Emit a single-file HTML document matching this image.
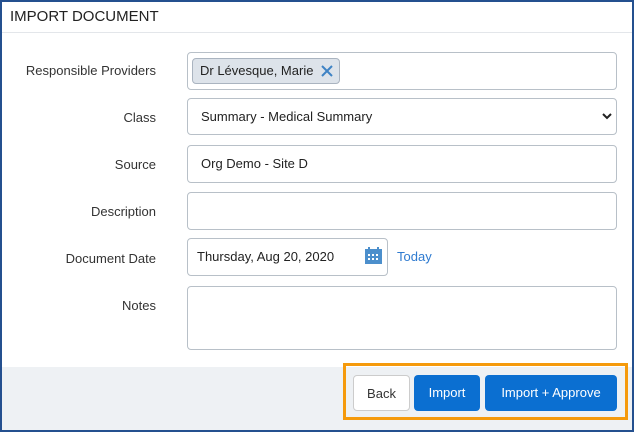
<!DOCTYPE html><html><head><style>
body{margin:0;width:634px;height:432px;overflow:hidden;font-family:"Liberation Sans",sans-serif;font-size:13px;color:#333}
.frame{position:absolute;left:0;top:0;width:630px;height:428px;border:2px solid #24508f;background:#fff}
.hdr{position:absolute;left:0;top:0;width:630px;height:31px;border-bottom:1px solid #e3e6ea;font-size:15px;line-height:30px;padding-left:8px;box-sizing:border-box;color:#222}
.lbl{position:absolute;right:476px;font-size:13px;color:#333;white-space:nowrap}
.in{position:absolute;left:185px;width:430px;border:1px solid #b8c0c8;border-radius:4px;box-sizing:border-box;background:#fff;font-size:13px;color:#222;white-space:nowrap}
.foot{position:absolute;left:0;top:365px;width:630px;height:63px;background:#eef1f4}
.org{position:absolute;left:341px;top:361px;width:285px;height:57px;border:3px solid #f59a0c;box-sizing:border-box}
.btn{position:absolute;top:373px;height:36px;border-radius:4px;box-sizing:border-box;font-size:13px;line-height:36px;text-align:center;white-space:nowrap}
</style></head><body><div class="frame">
<div class="hdr">IMPORT DOCUMENT</div>
<div class="lbl" style="top:61px">Responsible Providers</div>
<div class="in" style="top:50px;height:38px"><span style="position:absolute;left:4px;top:5px;height:26px;line-height:24px;padding:0 0 0 7px;background:#dde3ea;border:1px solid #aab4c0;border-radius:4px;box-sizing:border-box;width:148px;white-space:nowrap">Dr Lévesque, Marie<svg style="position:absolute;right:6px;top:6px" width="12" height="12" viewBox="0 0 12 12"><path d="M1 1L11 11M11 1L1 11" stroke="#3f83c4" stroke-width="2"/></svg></span></div>
<div class="lbl" style="top:108px">Class</div>
<div class="in" style="top:96px;height:37px;line-height:35px;padding-left:13px">Summary - Medical Summary<svg style="position:absolute;right:4px;top:13px" width="10" height="8" viewBox="0 0 10 8"><path d="M1 2L5 6L9 2" stroke="#222" stroke-width="2" fill="none"/></svg></div>
<div class="lbl" style="top:155px">Source</div>
<div class="in" style="top:143px;height:38px;line-height:36px;padding-left:13px">Org Demo - Site D</div>
<div class="lbl" style="top:202px">Description</div>
<div class="in" style="top:190px;height:38px"></div>
<div class="lbl" style="top:249px">Document Date</div>
<div class="in" style="top:236px;height:38px;width:201px;line-height:36px;padding-left:9px">Thursday, Aug 20, 2020<svg style="position:absolute;left:177px;top:8px" width="17" height="17" viewBox="0 0 17 17"><rect x="0" y="2" width="17" height="15" fill="#4c8fcc"/><rect x="3" y="0" width="2" height="4" fill="#4c8fcc"/><rect x="12" y="0" width="2" height="4" fill="#4c8fcc"/><g fill="#fff"><rect x="3" y="7" width="2" height="2"/><rect x="7" y="7" width="2" height="2"/><rect x="11" y="7" width="2" height="2"/><rect x="3" y="11" width="2" height="2"/><rect x="7" y="11" width="2" height="2"/><rect x="11" y="11" width="2" height="2"/></g></svg></div>
<div style="position:absolute;left:395px;top:247px;color:#2f7bd0">Today</div>
<div class="lbl" style="top:296px">Notes</div>
<div class="in" style="top:284px;height:64px"></div>
<div class="foot"></div>
<div class="org"></div>
<div class="btn" style="left:351px;width:57px;border:1px solid #ccc;background:#fff;color:#333">Back</div>
<div class="btn" style="left:412px;width:66px;background:#0b6fd1;color:#fff">Import</div>
<div class="btn" style="left:483px;width:132px;background:#0b6fd1;color:#fff">Import + Approve</div>
</div></body></html>
